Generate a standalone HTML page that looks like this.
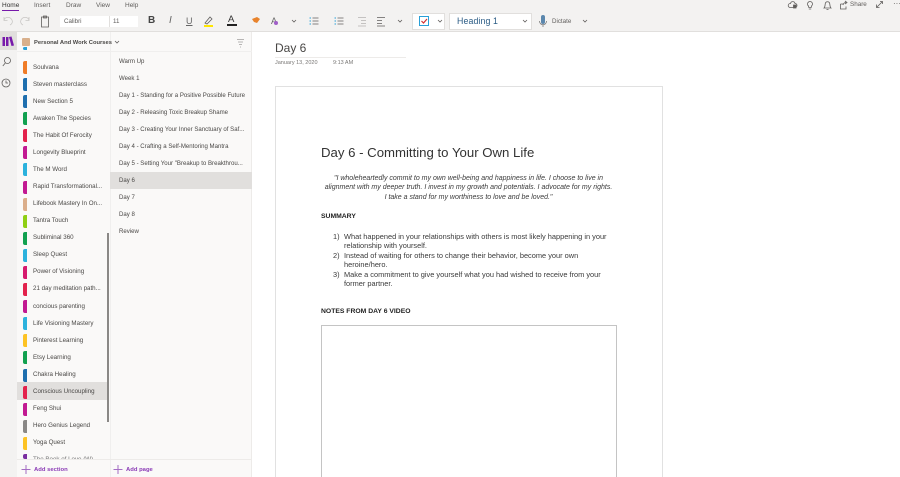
<!DOCTYPE html>
<html><head><meta charset="utf-8"><style>
html,body{margin:0;padding:0;background:#fff}
#w{position:relative;width:900px;height:477px;overflow:hidden;background:#fff;font-family:"Liberation Sans",sans-serif;color:#323130;filter:blur(.3px)}
.a{position:absolute;white-space:nowrap}
#top{position:absolute;left:0;top:0;width:900px;height:32px;background:#f3f2f1;border-bottom:1px solid #e1dfdd;box-sizing:border-box}
.m{position:absolute;top:.5px;font-size:6.5px;color:#605e5c;line-height:9px}
#rail{position:absolute;left:0;top:32px;width:17px;height:445px;background:#f3f2f1}
#sec{position:absolute;left:17px;top:32px;width:93px;height:445px;background:#faf9f8}
#pg{position:absolute;left:110px;top:32px;width:142px;height:445px;box-sizing:border-box;background:#faf9f8;border-left:1px solid #f0efee;border-right:1px solid #edebe9}
.s{position:absolute;left:33px;font-size:6.2px;line-height:10px;white-space:nowrap;color:#4a4846;margin-top:1px}
.t{position:absolute;left:23px;width:4px;height:13px;border-radius:2px 0 0 2px;margin-top:.5px}
.p{position:absolute;left:119px;font-size:6.08px;line-height:10px;white-space:nowrap;color:#4a4846;margin-top:1px}
.n{color:#3a3a3a}
.l{font-size:7.4px;line-height:10px}
.q{left:275px;width:387px;text-align:center;font-size:7px;line-height:9px;font-style:italic}
svg{position:absolute;left:0;top:0}
</style></head><body><div id="w">
<div id="top"></div>
<div class="m" style="left:2px;color:#323130">Home</div>
<div class="a" style="left:2px;top:9.500px;width:17px;height:1px;background:#7719aa"></div>
<div class="m" style="left:34px">Insert</div><div class="m" style="left:66px">Draw</div><div class="m" style="left:96px">View</div><div class="m" style="left:125px">Help</div>
<div class="a" style="left:60px;top:16px;width:78px;height:11px;background:#fff"></div>
<div class="a" style="left:109px;top:16px;width:1px;height:11px;background:#e1dfdd"></div>
<div class="a" style="left:64px;top:17px;font-size:6.200px;line-height:9px;color:#605e5c">Calibri</div>
<div class="a" style="left:113px;top:17px;font-size:6.200px;line-height:9px;color:#605e5c">11</div>
<div class="a" style="left:148px;top:15px;font-size:10px;font-weight:bold;line-height:12px;color:#444">B</div>
<div class="a" style="left:169px;top:15px;font-size:10px;font-style:italic;line-height:12px;color:#666">I</div>
<div class="a" style="left:186px;top:15px;font-size:9px;line-height:12px;color:#666;text-decoration:underline">U</div>
<div class="a" style="left:228px;top:14px;font-size:9.500px;line-height:11px;color:#333">A</div>
<div class="a" style="left:227px;top:24px;width:10px;height:2px;background:#222"></div>
<div class="a" style="left:271px;top:15px;font-size:9px;line-height:12px;color:#666">A</div>
<div class="a" style="left:412px;top:13px;width:33px;height:17px;background:#fff;border:1px solid #e1dfdd;box-sizing:border-box"></div>
<div class="a" style="left:449px;top:13px;width:83px;height:17px;background:#fff;border:1px solid #e1dfdd;box-sizing:border-box"></div>
<div class="a" style="left:457px;top:16px;font-size:8.800px;line-height:11px;color:#2b5c85;letter-spacing:.1px">Heading 1</div>
<div class="a" style="left:552px;top:17px;font-size:6.200px;line-height:9px;color:#605e5c">Dictate</div>
<div class="a" style="left:850px;top:0;font-size:6.300px;line-height:9px;color:#605e5c">Share</div>
<div class="a" style="left:893px;top:0;font-size:8px;line-height:8px;color:#605e5c">···</div>

<div id="rail"></div><div id="sec"></div><div id="pg"></div>
<div class="a" style="left:0;top:32px;width:17px;height:18px;background:#e1dfdd"></div>
<div class="a" style="left:17px;top:382px;width:91px;height:18px;background:#e1dfdd"></div>
<div class="a" style="left:110px;top:172px;width:142px;height:17px;background:#e1dfdd"></div>
<div class="a" style="left:107px;top:233px;width:1.500px;height:189px;background:#8a8886"></div>
<div class="a" style="left:17px;top:51px;width:235px;height:1px;background:#f0efee"></div>
<div class="a" style="left:17px;top:459px;width:235px;height:1px;background:#edebe9"></div>

<div class="a" style="left:22px;top:37.500px;width:8px;height:8.500px;border-radius:1px;background:#d9b08c"></div>
<div class="a" style="left:34px;top:37.500px;font-size:5.800px;line-height:10px;font-weight:bold;color:#4a4846">Personal And Work Courses</div>

<div class="t" style="top:46px;height:3px;background:#2aa0d8"></div>
<div class="t" style="top:60px;background:#f07c27"></div><div class="s" style="top:62px">Soulvana</div>
<div class="t" style="top:77px;background:#1f6fae"></div><div class="s" style="top:79px">Steven masterclass</div>
<div class="t" style="top:94px;background:#1f6fae"></div><div class="s" style="top:96px">New Section 5</div>
<div class="t" style="top:111px;background:#12a150"></div><div class="s" style="top:113px">Awaken The Species</div>
<div class="t" style="top:128px;background:#e3224c"></div><div class="s" style="top:130px">The Habit Of Ferocity</div>
<div class="t" style="top:145px;background:#c21a92"></div><div class="s" style="top:147px">Longevity Blueprint</div>
<div class="t" style="top:162px;background:#2cb2dd"></div><div class="s" style="top:164px">The M Word</div>
<div class="t" style="top:180px;background:#c21a92"></div><div class="s" style="top:181px">Rapid Transformational...</div>
<div class="t" style="top:197px;background:#dbae8a"></div><div class="s" style="top:198px">Lifebook Mastery In On...</div>
<div class="t" style="top:214px;background:#8fcf14"></div><div class="s" style="top:215px">Tantra Touch</div>
<div class="t" style="top:231px;background:#12a150"></div><div class="s" style="top:232px">Subliminal 360</div>
<div class="t" style="top:248px;background:#2cb2dd"></div><div class="s" style="top:249px">Sleep Quest</div>
<div class="t" style="top:265px;background:#d61a6e"></div><div class="s" style="top:266px">Power of Visioning</div>
<div class="t" style="top:282px;background:#e3224c"></div><div class="s" style="top:283px">21 day meditation path...</div>
<div class="t" style="top:299px;background:#c21a92"></div><div class="s" style="top:301px">concious parenting</div>
<div class="t" style="top:316px;background:#2cb2dd"></div><div class="s" style="top:318px">Life Visioning Mastery</div>
<div class="t" style="top:333px;background:#fdc324"></div><div class="s" style="top:335px">Pinterest Learning</div>
<div class="t" style="top:350px;background:#12a150"></div><div class="s" style="top:352px">Etsy Learning</div>
<div class="t" style="top:368px;background:#1f6fae"></div><div class="s" style="top:369px">Chakra Healing</div>
<div class="t" style="top:385px;background:#e3224c"></div><div class="s" style="top:386px">Conscious Uncoupling</div>
<div class="t" style="top:402px;background:#c21a92"></div><div class="s" style="top:403px">Feng Shui</div>
<div class="t" style="top:419px;background:#8a8886"></div><div class="s" style="top:420px">Hero Genius Legend</div>
<div class="t" style="top:436px;background:#fdc324"></div><div class="s" style="top:437px">Yoga Quest</div>
<div class="t" style="top:453px;height:5px;background:#7a2ea0"></div>
<div class="a" style="left:33px;top:456px;width:60px;height:3px;overflow:hidden"><div class="s" style="left:0;top:-1px;margin:0;color:#777">The Book of Love (W)</div></div>

<div class="a" style="left:34px;top:465px;font-size:5.900px;line-height:10px;color:#7719aa;font-weight:bold;opacity:.85">Add section</div>
<div class="a" style="left:126px;top:465px;font-size:5.900px;line-height:10px;color:#7719aa;font-weight:bold;opacity:.85">Add page</div>

<div class="p" style="top:56px">Warm Up</div>
<div class="p" style="top:73px">Week 1</div>
<div class="p" style="top:90px">Day 1 - Standing for a Positive Possible Future</div>
<div class="p" style="top:107px">Day 2 - Releasing Toxic Breakup Shame</div>
<div class="p" style="top:124px">Day 3 - Creating Your Inner Sanctuary of Saf...</div>
<div class="p" style="top:141px">Day 4 - Crafting a Self-Mentoring Mantra</div>
<div class="p" style="top:158px">Day 5 - Setting Your "Breakup to Breakthrou...</div>
<div class="p" style="top:175px">Day 6</div>
<div class="p" style="top:192px">Day 7</div>
<div class="p" style="top:209px">Day 8</div>
<div class="p" style="top:226px">Review</div>

<svg width="900" height="477" viewBox="0 0 900 477" fill="none">
<g stroke="#605e5c" stroke-width=".8">
<path d="M4 20c1-3 6-4 8 0 1 2 0 4-2 5M4 17v3.500h3.500M29 20c-1-3-6-4-8 0-1 2 0 4 2 5M29 17v3.500h-3.500" stroke="#c8c6c4"/>
<path d="M41.500 17h7v10h-7zM43.500 16h3v2h-3z"/>
<path d="M205 23l5-6 2 2-5 5z"/>
<path d="M292 20l2 2 2-2M398 20l2 2 2-2M438 20l2 2 2-2M523 20l2 2 2-2M583 20l2 2 2-2M115 41l2 2 2-2"/>
<path d="M312.500 18h6M312.500 21h6M312.500 24h6M337.500 18h6M337.500 21h6M337.500 24h6"/>
<path d="M358 17.500h8M361 20.500h5M361 23.500h5M358 26h8" stroke="#b5b3b1"/>
<path d="M377 17.500h8M377 20.500h5M377 23.500h5M377 26h8"/>
<path d="M790 7.500h5a2 2 0 0 0 0-4c-.5-2.500-4-2.500-4.500 0a2 2 0 0 0-.5 4z"/>
<rect x="793.500" y="5" width="2.500" height="3" fill="#605e5c"/>
<path d="M807.500 4a2.500 2.500 0 1 1 4 2l-.3 1.500h-2.400l-.3-1.500a2.500 2.500 0 0 1-1-2zM808.800 9h2.400"/>
<path d="M824 8h7c-1-1-1-2-1.200-4-.3-3-4.300-3-4.600 0-.2 2-.2 3-1.200 4zM826.500 9.500h2"/>
<path d="M840.500 4h3M840.500 4v5h5.500V6.500M843 5c.5-2 1.500-2.500 3-2.500M845 1l2 1.500-2 1.500"/>
<path d="M876.500 7.500l6-6M876.500 4.500v3h3M880 1.500h2.500V4"/>
<path d="M237 39.500h7M238 42h5M239 44.500h3M240 47h1" stroke="#a19f9d"/>
<circle cx="7.500" cy="60.500" r="3"/><path d="M5.300 63l-2.500 3"/>
<circle cx="6" cy="83" r="4"/><path d="M6 80.500V83h2"/>
</g>
<path d="M204 26h9" stroke="#ffe600" stroke-width="2"/>
<path d="M252 19l5-2 3 2-3 4-3-1z" fill="#e8832c"/>
<circle cx="276" cy="23" r="2" fill="#a05fc8"/>
<path d="M309.500 18h1.500M309.500 21h1.500M309.500 24h1.500M334.500 18h1.500M334.500 21h1.500M334.500 24h1.500" stroke="#2aa0d8"/>
<rect x="419.500" y="16.500" width="9" height="9" stroke="#2aa0d8"/>
<path d="M421.500 21l2 2 3.500-4" stroke="#d32f2f" stroke-width="1.200"/>
<rect x="541" y="15" width="4" height="9" rx="2" fill="#5b87ad"/><path d="M539.500 21c0 5 7 5 7 0M543 25v2" stroke="#777" stroke-width=".8"/>
<path d="M2.500 37h2.500v9H2.500zM6 37h2.500v9H6zM9 37l2.500-.5 2.500 9-2.500.5z" fill="#7719aa"/>
<path d="M26 465v9M21.500 469.500h9M118 465v9M113.500 469.500h9" stroke="#a46dc4"/>
</svg>

<div class="a" style="left:275px;top:41px;font-size:12px;line-height:15px;color:#484644">Day 6</div>
<div class="a" style="left:275px;top:57px;width:131px;height:1px;background:#edebe9"></div>
<div class="a" style="left:275px;top:59.500px;font-size:5.500px;line-height:7px;color:#797775">January 13, 2020</div>
<div class="a" style="left:333px;top:59.500px;font-size:5.500px;line-height:7px;color:#797775">9:13 AM</div>

<div class="a" style="left:275px;top:85.500px;width:388px;height:391.500px;border:1px solid #e1e1e1;border-bottom:0;box-sizing:border-box;background:#fff"></div>
<div class="a" style="left:321px;top:325px;width:296px;height:152px;border:1.500px solid #c4c4c4;border-bottom:0;box-sizing:border-box;background:#fff"></div>

<div class="a n" style="left:321px;top:144px;font-size:13.200px;line-height:18px;color:#333">Day 6 - Committing to Your Own Life</div>
<div class="a n q" style="top:173.500px">"I wholeheartedly commit to my own well-being and happiness in life. I choose to live in</div>
<div class="a n q" style="top:183px">alignment with my deeper truth. I invest in my growth and potentials. I advocate for my rights.</div>
<div class="a n q" style="top:192.500px">I take a stand for my worthiness to love and be loved."</div>
<div class="a n" style="left:321px;top:212px;font-size:6.800px;line-height:9px;font-weight:bold;color:#222">SUMMARY</div>
<div class="a n l" style="left:333px;top:231.500px">1)</div>
<div class="a n l" style="left:344px;top:231.500px">What happened in your relationships with others is most likely happening in your</div>
<div class="a n l" style="left:344px;top:241px">relationship with yourself.</div>
<div class="a n l" style="left:333px;top:250.500px">2)</div>
<div class="a n l" style="left:344px;top:250.500px">Instead of waiting for others to change their behavior, become your own</div>
<div class="a n l" style="left:344px;top:260px">heroine/hero.</div>
<div class="a n l" style="left:333px;top:269.500px">3)</div>
<div class="a n l" style="left:344px;top:269.500px">Make a commitment to give yourself what you had wished to receive from your</div>
<div class="a n l" style="left:344px;top:279px">former partner.</div>
<div class="a n" style="left:321px;top:307px;font-size:6.800px;line-height:9px;font-weight:bold;color:#222">NOTES FROM DAY 6 VIDEO</div>
</div></body></html>
